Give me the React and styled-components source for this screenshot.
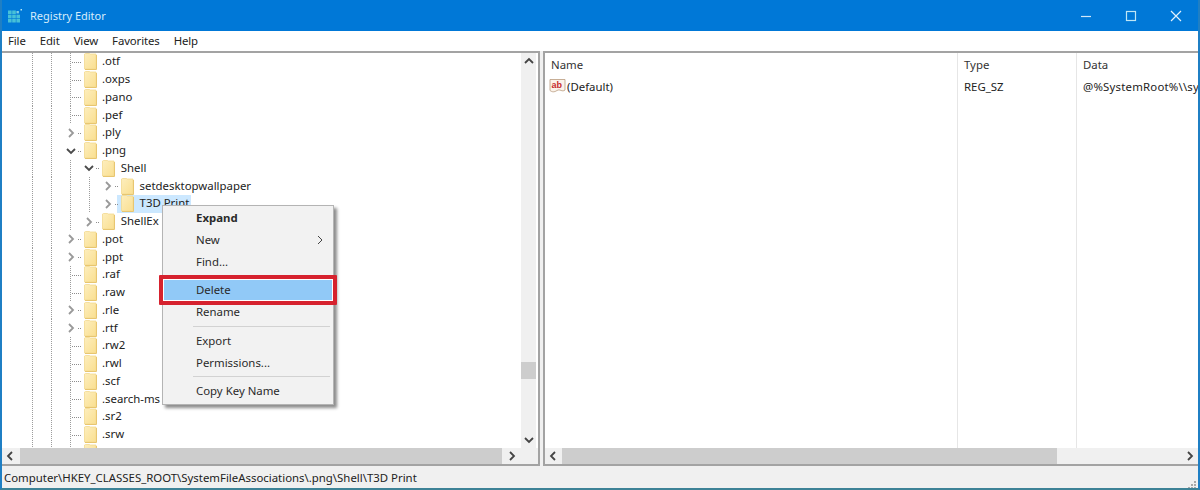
import React from "react";
import styled, { createGlobalStyle } from "styled-components";

const Global = createGlobalStyle`
  html, body { margin: 0; padding: 0; background: #fff; }
  * { box-sizing: border-box; }
`;

const Win = styled.div`
  width: 1200px; height: 490px; overflow: hidden; position: relative;
  display: flex; flex-direction: column;
  font-family: "Noto Sans", "Open Sans", sans-serif; font-size: 11.4px; color: #1c1c1c;
  background: #f0f0f0;
  border-left: 2px solid #1f7fc4; border-right: 2px solid #1f7fc4; border-bottom: 2px solid #3d8296;
`;
const TitleBar = styled.div`
  height: 31px; flex: none; margin: 0 -2px; background: #0078d7; color: #d6ecfb;
  display: flex; align-items: center; padding: 0 1.5px 0 8px; font-size: 11px;
`;
const TitleText = styled.span` margin-left: 7px; flex: 1; `;
const WinButton = styled.div`
  width: 45px; height: 31px; display: flex; align-items: center; justify-content: center;
`;
const MenuBar = styled.div`
  height: 20px; flex: none; background: #fff; display: flex; align-items: center; padding: 0 0 2px 6px; gap: 14px;
  color: #222; letter-spacing: -0.12px;
`;
const Panes = styled.div` flex: 1; min-height: 0; display: flex; gap: 3px; background: #f0f0f0; `;
const Pane = styled.div`
  width: ${p => p.$w}px; flex: ${p => p.$grow ? 1 : "none"}; background: #fff; min-width: 0;
  display: flex; flex-direction: column;
  border-top: 2px solid #a3a3a3; border-bottom: 2px solid #a3a3a3;
  border-${p => p.$side}: 2px solid #a3a3a3;
`;
const PaneBody = styled.div` flex: 1; min-height: 0; display: flex; `;
const TreeList = styled.div` flex: 1; min-width: 0; overflow: hidden; `;
const Row = styled.div`
  height: 17.75px; display: flex; align-items: stretch; padding-left: 21.6px; white-space: nowrap;
`;
const Cell = styled.span`
  width: 18.8px; flex: none; position: relative; display: flex; align-items: center; justify-content: center;
  ${p => p.$line && `background-image: linear-gradient(#9c9c9c 50%, transparent 50%);
    background-size: 1px 2px; background-position: center top; background-repeat: repeat-y;`}
`;
const Tick = styled.span`
  position: absolute; left: 50%; top: 50%; margin-left: ${p => p.$short ? 7 : 1}px; width: ${p => p.$short ? 3 : 9}px;
  border-top: 1px dotted #8d8d8d;
`;
const FolderSlot = styled.span`
  margin-left: 3.6px; width: 13px; flex: none; display: flex; align-items: center;
`;
const Label = styled.span`
  margin-left: 5.4px; padding: 0 2px 2px 0; display: flex; align-items: center; line-height: 15px; color: #222;
`;
const Selected = styled.span`
  display: flex; align-items: stretch; background: #cce8ff; margin-left: -1px; padding-left: 1px;
`;
const VScroll = styled.div`
  width: 15px; flex: none; margin-right: 2px; background: #f0f0f0; display: flex; flex-direction: column; align-items: center;
`;
const ArrowBox = styled.div`
  width: 16px; height: 16px; flex: none; display: flex; align-items: center; justify-content: center;
`;
const VThumbTrack = styled.div` flex: 1; width: 100%; padding-top: ${p => p.$top}px; `;
const VThumb = styled.div` height: 17px; background: #cdcdcd; `;
const HScroll = styled.div`
  height: 16px; flex: none; background: #f0f0f0; display: flex; align-items: stretch;
`;
const HTrack = styled.div` flex: 1; min-width: 0; display: flex; padding-left: ${p => p.$left}px; padding-right: ${p => p.$right}px; `;
const HThumb = styled.div` flex: 1; background: #cdcdcd; `;
const Corner = styled.div` width: 18px; flex: none; `;
const Columns = styled.div` flex: 1; min-height: 0; display: flex; overflow: hidden; `;
const Column = styled.div`
  width: ${p => p.$w}px; flex: ${p => p.$grow ? 1 : "none"}; padding-left: 6px; white-space: nowrap; overflow: hidden;
  border-right: ${p => p.$grow ? "none" : "1px solid #e6e6e6"};
`;
const ColHead = styled.div` height: 23px; margin-bottom: 1px; display: flex; align-items: center; color: #333; `;
const ColCell = styled.div`
  height: 18px; display: flex; align-items: center; color: #222;
  letter-spacing: ${p => p.$wide ? "0.2px" : "0"};
`;
const IconSlot = styled.span` display: flex; margin: 0 1px 0 -2px; `;
const StatusBar = styled.div`
  height: 22px; flex: none; display: flex; align-items: center; padding-left: 2px; color: #222; position: relative;
`;
const StatusText = styled.span` flex: 1; `;
const Grip = styled.div` width: 9px; height: 9px; align-self: flex-end; margin: 0 1px 1px 0; `;
const Menu = styled.div`
  position: absolute; left: 160px; top: 205px; width: 172px; height: 200px; background: #f2f2f2;
  border: 1px solid #b4b4b4; box-shadow: 3px 3px 3px rgba(0,0,0,.45); padding-top: 1px;
  display: flex; flex-direction: column;
`;
const MenuItem = styled.div`
  height: 21.7px; flex: none; padding: 0 8px 0 33px; display: flex; align-items: center; justify-content: space-between;
  color: #2a2a2a; font-weight: ${p => p.$bold ? 700 : 400};
`;
const DeleteOutline = styled.div`
  height: 30px; flex: none; margin: 3.4px -4px -4.5px -4px; border: 4px solid #d6222e; background: #fff;
  display: flex; border-radius: 1px;
`;
const DeleteItem = styled.div`
  flex: 1; margin: 1px; background: #91c9f7; padding: 0 0 1px 32px; display: flex; align-items: center; color: #2a2a2a;
`;
const Separator = styled.div` height: 1px; flex: none; background: #d2d2d2; margin: 3px 3px 3px 30px; `;

const Folder = () => (
  <svg width="13" height="17" viewBox="0 0 13 17">
    <defs>
      <linearGradient id="fg" x1="0" y1="0" x2="1" y2="1">
        <stop offset="0" stopColor="#fdeebd" />
        <stop offset="1" stopColor="#fadf90" />
      </linearGradient>
    </defs>
    <path d="M0.5 1 L1.5 0.5 H5.5 L6.5 1 H12 V16 H0.5 Z" fill="url(#fg)" stroke="#f3d98f" strokeWidth="0.8" />
    <path d="M12.5 2 V16.5 H1" fill="none" stroke="#e8c670" strokeWidth="1" />
  </svg>
);

const Chev = ({ dir = "right", color = "#999", w = 1.8 }) => {
  const d = {
    right: "M3 1 L7 5 L3 9",
    left: "M7 1 L3 5 L7 9",
    down: "M1 3 L5 7 L9 3",
    up: "M1 7 L5 3 L9 7",
  }[dir];
  return (
    <svg width="10" height="10" viewBox="0 0 10 10">
      <path d={d} fill="none" stroke={color} strokeWidth={w} />
    </svg>
  );
};

const SBArrow = ({ dir }) => (
  <ArrowBox><Chev dir={dir} color="#444" w={1.8} /></ArrowBox>
);

const TitleIcon = () => (
  <svg width="15" height="14" viewBox="0 0 15 14">
    {[0, 1, 2].flatMap(r => [0, 1, 2].map(c => (
      <rect key={`${r}${c}`} x={c * 4.2} y={1.5 + r * 4.2} width="3.6" height="3.6" fill={r === 0 && c === 2 ? "#0078d7" : "#46c0d8"} />
    )))}
    <rect x="12.5" y="0" width="1.5" height="1.5" fill="#b5e6f2" />
    <rect x="8.5" y="2" width="2.4" height="2.4" fill="#7fd0e4" />
  </svg>
);

const TREE = [
  { t: ".otf" }, { t: ".oxps" }, { t: ".pano" }, { t: ".pef" },
  { t: ".ply", c: "right" }, { t: ".png", c: "down" },
  { t: "Shell", level: 1, c: "down" },
  { t: "setdesktopwallpaper", level: 2, c: "right" },
  { t: "T3D Print", level: 2, c: "right", sel: true },
  { t: "ShellEx", level: 1, c: "right" },
  { t: ".pot", c: "right" }, { t: ".ppt", c: "right" },
  { t: ".raf" }, { t: ".raw" },
  { t: ".rle", c: "right" }, { t: ".rtf", c: "right" },
  { t: ".rw2" }, { t: ".rwl" }, { t: ".scf" }, { t: ".search-ms" },
  { t: ".sr2" }, { t: ".srw" }, { t: "" },
];

const TreeRow = ({ t, level = 0, c, sel }) => {
  const cells = [<Cell key="a" $line />, <Cell key="b" $line />];
  const own = (
    <Cell key="own" $line={!c}>
      {c ? <Chev dir={c} color={c === "down" ? "#4a4a4a" : "#999"} /> : null}
      <Tick $short={!!c} />
    </Cell>
  );
  if (level === 0) cells.push(own);
  if (level >= 1) cells.push(<Cell key="l1" $line />);
  if (level === 1) cells.push(own);
  if (level === 2) cells.push(<Cell key="l2" $line />, own);
  const body = (
    <>
      <FolderSlot><Folder /></FolderSlot>
      <Label>{t}</Label>
    </>
  );
  return (
    <Row>
      {cells}
      {sel ? <Selected>{body}</Selected> : body}
    </Row>
  );
};

const StringIcon = () => (
  <svg width="17" height="16" viewBox="0 0 17 16">
    <path d="M1 1.5 H16 V12 C13 14.5 11 10.5 8 12.5 C5 14.5 3 14 1 12.5 Z" fill="#fbf3ea" stroke="#b99a7e" strokeWidth="0.8" />
    <text x="2.5" y="9.5" fontFamily="Liberation Sans, sans-serif" fontWeight="700" fontSize="9" fill="#c62c2c">ab</text>
  </svg>
);

export default function App() {
  return (
    <Win>
      <Global />
      <TitleBar>
        <TitleIcon />
        <TitleText>Registry Editor</TitleText>
        <WinButton>
          <svg width="12" height="12" viewBox="0 0 12 12"><path d="M1 6.5 H11" stroke="#cfe8fa" strokeWidth="1.2" /></svg>
        </WinButton>
        <WinButton>
          <svg width="12" height="12" viewBox="0 0 12 12"><rect x="1.5" y="1.5" width="9" height="9" fill="none" stroke="#bfe6f5" strokeWidth="1.2" /></svg>
        </WinButton>
        <WinButton>
          <svg width="12" height="12" viewBox="0 0 12 12"><path d="M1 1 L11 11 M11 1 L1 11" stroke="#e2f1fc" strokeWidth="1.2" /></svg>
        </WinButton>
      </TitleBar>
      <MenuBar>
        <span>File</span><span>Edit</span><span>View</span><span>Favorites</span><span>Help</span>
      </MenuBar>
      <Panes>
        <Pane $w={538} $side="right">
          <PaneBody>
            <TreeList>
              {TREE.map((r, i) => <TreeRow key={i} {...r} />)}
            </TreeList>
            <VScroll>
              <SBArrow dir="up" />
              <VThumbTrack $top={293}><VThumb /></VThumbTrack>
              <SBArrow dir="down" />
            </VScroll>
          </PaneBody>
          <HScroll>
            <SBArrow dir="left" />
            <HTrack $left={2} $right={2}><HThumb /></HTrack>
            <SBArrow dir="right" />
            <Corner />
          </HScroll>
        </Pane>
        <Pane $grow $side="left">
          <PaneBody>
            <Columns>
              <Column $w={413}>
                <ColHead>Name</ColHead>
                <ColCell><IconSlot><StringIcon /></IconSlot>(Default)</ColCell>
              </Column>
              <Column $w={119}>
                <ColHead>Type</ColHead>
                <ColCell>REG_SZ</ColCell>
              </Column>
              <Column $grow>
                <ColHead>Data</ColHead>
                <ColCell $wide>@%SystemRoot%\\sy</ColCell>
              </Column>
            </Columns>
          </PaneBody>
          <HScroll>
            <SBArrow dir="left" />
            <HTrack $left={1} $right={125}><HThumb /></HTrack>
            <SBArrow dir="right" />
          </HScroll>
        </Pane>
      </Panes>
      <StatusBar>
        <StatusText>Computer\HKEY_CLASSES_ROOT\SystemFileAssociations\.png\Shell\T3D Print</StatusText>
        <Grip>
          <svg width="9" height="9" viewBox="0 0 9 9">
            {[[6,0],[3,3],[6,3],[0,6],[3,6],[6,6]].map(([x,y]) => <rect key={`${x}${y}`} x={x} y={y} width="2" height="2" fill="#a8a8a8" />)}
          </svg>
        </Grip>
      </StatusBar>
      <Menu>
        <MenuItem $bold>Expand</MenuItem>
        <MenuItem>New <Chev dir="right" color="#444" w={1} /></MenuItem>
        <MenuItem>Find...</MenuItem>
        <DeleteOutline><DeleteItem>Delete</DeleteItem></DeleteOutline>
        <MenuItem>Rename</MenuItem>
        <Separator />
        <MenuItem>Export</MenuItem>
        <MenuItem>Permissions...</MenuItem>
        <Separator />
        <MenuItem>Copy Key Name</MenuItem>
      </Menu>
    </Win>
  );
}
